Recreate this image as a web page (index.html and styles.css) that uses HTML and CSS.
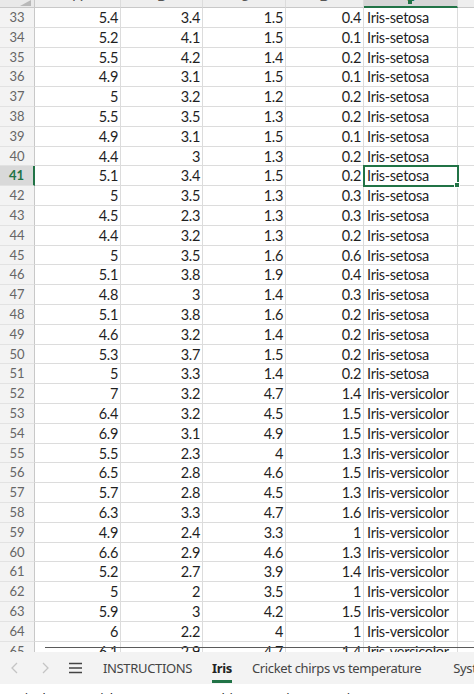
FILE: index.html
```html
<!DOCTYPE html>
<html>
<head>
<meta charset="utf-8">
<link rel="stylesheet" href="styles.css">
</head>
<body>
<div class="sheet">
  <div class="grid">
    <div class="corner"><span class="tri"></span></div>
    <div class="ch"><span>A</span></div>
    <div class="ch"><span>B</span></div>
    <div class="ch"><span>C</span></div>
    <div class="ch"><span>D</span></div>
    <div class="ch sel"><span>E</span><i class="tick"></i></div>
    <div class="ch"><span>F</span></div>

    <div class="rh">33</div><div class="n">5.4</div><div class="n">3.4</div><div class="n">1.5</div><div class="n">0.4</div><div class="t">Iris-setosa</div><div class="e"></div>
    <div class="rh">34</div><div class="n">5.2</div><div class="n">4.1</div><div class="n">1.5</div><div class="n">0.1</div><div class="t">Iris-setosa</div><div class="e"></div>
    <div class="rh">35</div><div class="n">5.5</div><div class="n">4.2</div><div class="n">1.4</div><div class="n">0.2</div><div class="t">Iris-setosa</div><div class="e"></div>
    <div class="rh">36</div><div class="n">4.9</div><div class="n">3.1</div><div class="n">1.5</div><div class="n">0.1</div><div class="t">Iris-setosa</div><div class="e"></div>
    <div class="rh">37</div><div class="n">5</div><div class="n">3.2</div><div class="n">1.2</div><div class="n">0.2</div><div class="t">Iris-setosa</div><div class="e"></div>
    <div class="rh">38</div><div class="n">5.5</div><div class="n">3.5</div><div class="n">1.3</div><div class="n">0.2</div><div class="t">Iris-setosa</div><div class="e"></div>
    <div class="rh">39</div><div class="n">4.9</div><div class="n">3.1</div><div class="n">1.5</div><div class="n">0.1</div><div class="t">Iris-setosa</div><div class="e"></div>
    <div class="rh">40</div><div class="n">4.4</div><div class="n">3</div><div class="n">1.3</div><div class="n">0.2</div><div class="t">Iris-setosa</div><div class="e"></div>
    <div class="rh active">41</div><div class="n">5.1</div><div class="n">3.4</div><div class="n">1.5</div><div class="n">0.2</div><div class="t cur">Iris-setosa<i class="handle"></i></div><div class="e"></div>
    <div class="rh">42</div><div class="n">5</div><div class="n">3.5</div><div class="n">1.3</div><div class="n">0.3</div><div class="t">Iris-setosa</div><div class="e"></div>
    <div class="rh">43</div><div class="n">4.5</div><div class="n">2.3</div><div class="n">1.3</div><div class="n">0.3</div><div class="t">Iris-setosa</div><div class="e"></div>
    <div class="rh">44</div><div class="n">4.4</div><div class="n">3.2</div><div class="n">1.3</div><div class="n">0.2</div><div class="t">Iris-setosa</div><div class="e"></div>
    <div class="rh">45</div><div class="n">5</div><div class="n">3.5</div><div class="n">1.6</div><div class="n">0.6</div><div class="t">Iris-setosa</div><div class="e"></div>
    <div class="rh">46</div><div class="n">5.1</div><div class="n">3.8</div><div class="n">1.9</div><div class="n">0.4</div><div class="t">Iris-setosa</div><div class="e"></div>
    <div class="rh">47</div><div class="n">4.8</div><div class="n">3</div><div class="n">1.4</div><div class="n">0.3</div><div class="t">Iris-setosa</div><div class="e"></div>
    <div class="rh">48</div><div class="n">5.1</div><div class="n">3.8</div><div class="n">1.6</div><div class="n">0.2</div><div class="t">Iris-setosa</div><div class="e"></div>
    <div class="rh">49</div><div class="n">4.6</div><div class="n">3.2</div><div class="n">1.4</div><div class="n">0.2</div><div class="t">Iris-setosa</div><div class="e"></div>
    <div class="rh">50</div><div class="n">5.3</div><div class="n">3.7</div><div class="n">1.5</div><div class="n">0.2</div><div class="t">Iris-setosa</div><div class="e"></div>
    <div class="rh">51</div><div class="n">5</div><div class="n">3.3</div><div class="n">1.4</div><div class="n">0.2</div><div class="t">Iris-setosa</div><div class="e"></div>
    <div class="rh">52</div><div class="n">7</div><div class="n">3.2</div><div class="n">4.7</div><div class="n">1.4</div><div class="t">Iris-versicolor</div><div class="e"></div>
    <div class="rh">53</div><div class="n">6.4</div><div class="n">3.2</div><div class="n">4.5</div><div class="n">1.5</div><div class="t">Iris-versicolor</div><div class="e"></div>
    <div class="rh">54</div><div class="n">6.9</div><div class="n">3.1</div><div class="n">4.9</div><div class="n">1.5</div><div class="t">Iris-versicolor</div><div class="e"></div>
    <div class="rh">55</div><div class="n">5.5</div><div class="n">2.3</div><div class="n">4</div><div class="n">1.3</div><div class="t">Iris-versicolor</div><div class="e"></div>
    <div class="rh">56</div><div class="n">6.5</div><div class="n">2.8</div><div class="n">4.6</div><div class="n">1.5</div><div class="t">Iris-versicolor</div><div class="e"></div>
    <div class="rh">57</div><div class="n">5.7</div><div class="n">2.8</div><div class="n">4.5</div><div class="n">1.3</div><div class="t">Iris-versicolor</div><div class="e"></div>
    <div class="rh">58</div><div class="n">6.3</div><div class="n">3.3</div><div class="n">4.7</div><div class="n">1.6</div><div class="t">Iris-versicolor</div><div class="e"></div>
    <div class="rh">59</div><div class="n">4.9</div><div class="n">2.4</div><div class="n">3.3</div><div class="n">1</div><div class="t">Iris-versicolor</div><div class="e"></div>
    <div class="rh">60</div><div class="n">6.6</div><div class="n">2.9</div><div class="n">4.6</div><div class="n">1.3</div><div class="t">Iris-versicolor</div><div class="e"></div>
    <div class="rh">61</div><div class="n">5.2</div><div class="n">2.7</div><div class="n">3.9</div><div class="n">1.4</div><div class="t">Iris-versicolor</div><div class="e"></div>
    <div class="rh">62</div><div class="n">5</div><div class="n">2</div><div class="n">3.5</div><div class="n">1</div><div class="t">Iris-versicolor</div><div class="e"></div>
    <div class="rh">63</div><div class="n">5.9</div><div class="n">3</div><div class="n">4.2</div><div class="n">1.5</div><div class="t">Iris-versicolor</div><div class="e"></div>
    <div class="rh">64</div><div class="n">6</div><div class="n">2.2</div><div class="n">4</div><div class="n">1</div><div class="t">Iris-versicolor</div><div class="e"></div>
    <div class="rh">65</div><div class="n">6.1</div><div class="n">2.9</div><div class="n">4.7</div><div class="n">1.4</div><div class="t">Iris-versicolor</div><div class="e"></div>
  </div>
  <div class="hscroll"></div>
</div>
<div class="tabs">
  <span class="nav">
    <svg width="10" height="14" viewBox="0 0 10 14"><path d="M7 2 L2 7 L7 12" fill="none" stroke="#c4c4c4" stroke-width="1.3"/></svg>
  </span>
  <span class="nav">
    <svg width="10" height="14" viewBox="0 0 10 14"><path d="M3 2 L8 7 L3 12" fill="none" stroke="#c4c4c4" stroke-width="1.3"/></svg>
  </span>
  <span class="nav menu">
    <svg width="13" height="12" viewBox="0 0 13 12"><path d="M0 1.5 H13 M0 6 H13 M0 10.5 H13" fill="none" stroke="#444" stroke-width="1.3"/></svg>
  </span>
  <span class="tab">INSTRUCTIONS</span>
  <span class="tab on">Iris</span>
  <span class="tab">Cricket chirps vs temperature</span>
  <span class="tab last">System</span>
</div>
<div class="status"><span>Iris data set, Fisher 1936, UCI Machine Learning Repository</span></div>
</body>
</html>
```
FILE: styles.css
```css
* { box-sizing: border-box; }
html, body {
  margin: 0;
  padding: 0;
  background: #ffffff;
  width: 474px;
  height: 694px;
  overflow: hidden;
}
body {
  font-family: Lato, "Liberation Sans", sans-serif;
  color: #1f1f1f;
}
.sheet {
  position: relative;
  height: 652px;
  overflow: hidden;
}
.grid {
  display: grid;
  grid-template-columns: 35px 86px 82px 83px 78px 94px 100px;
  grid-template-rows: 8px repeat(33, 19.8px);
  width: 558px;
  font-size: 14.5px;
  letter-spacing: -0.3px;
}
.grid > div {
  border-right: 1px solid #dcdcdc;
  border-bottom: 1px solid #dcdcdc;
  overflow: hidden;
  white-space: nowrap;
  line-height: 19px;
}
.corner {
  background: #e9e9e9;
  position: relative;
}
.grid > .corner { border-right: 1px solid #c8c8c8; border-bottom: 1px solid #c8c8c8; }
.tri {
  position: absolute;
  right: 3px;
  bottom: 1px;
  width: 0;
  height: 0;
  border-left: 11px solid transparent;
  border-bottom: 6px solid #b9b9b9;
}
.grid > .ch {
  background: #eeeeee;
  border-bottom: 1px solid #c8c8c8;
  text-align: center;
  font-size: 14px;
  color: #555;
  position: relative;
}
.ch span {
  display: block;
  margin-top: -14px;
  line-height: 20px;
}
.grid > .ch.sel {
  background: #d6d6d6;
  border-bottom: 2px solid #217346;
  color: #217346;
}
.tick {
  position: absolute;
  left: 44px;
  top: 0;
  width: 4px;
  height: 4px;
  background: #217346;
}
.grid > .rh {
  background: #f3f3f3;
  border-right: 1px solid #c8c8c8;
  border-bottom: 1px solid #e2e2e2;
  color: #666;
  font-size: 13px;
  letter-spacing: 0;
  text-align: center;
}
.grid > .rh.active {
  background: #d9d9d9;
  color: #217346;
  font-weight: bold;
  border-right: 2px solid #217346;
}
.n {
  text-align: right;
  padding-right: 2px;
}
.t {
  padding-left: 3px;
}
.grid > .t.cur {
  position: relative;
  overflow: visible;
  outline: 2px solid #217346;
  outline-offset: -1px;
}
.handle {
  position: absolute;
  right: -3px;
  bottom: -3px;
  width: 6px;
  height: 6px;
  background: #217346;
  border: 1px solid #fff;
}
.hscroll {
  position: absolute;
  left: 45px;
  right: 0;
  top: 647px;
  height: 1px;
  background: #5a5a5a;
}
.tabs {
  height: 32px;
  background: #f3f3f3;
  display: flex;
  align-items: center;
  font-family: "Noto Sans", "Open Sans", sans-serif;
  font-size: 13px;
  letter-spacing: -0.35px;
  color: #444;
  white-space: nowrap;
  overflow: hidden;
}
.tabs > * { flex-shrink: 0; }
.nav {
  display: flex;
  align-items: center;
  width: 30px;
  justify-content: center;
}
.nav.menu { margin-right: 3px; }
.tab {
  padding: 0 10px;
  height: 32px;
  line-height: 32px;
  position: relative;
}
.tab.last { margin-left: 12px; }
.tab.on {
  font-weight: bold;
  color: #222;
}
.tab.on::after {
  content: "";
  position: absolute;
  left: 10px;
  right: 10px;
  bottom: 1px;
  height: 3px;
  background: #217346;
}
.status {
  height: 10px;
  overflow: hidden;
  padding-left: 15px;
  font-family: "Noto Sans", sans-serif;
  font-size: 13px;
  color: #222;
}
.status span {
  display: block;
  line-height: 20px;
  margin-top: 4px;
}
```
